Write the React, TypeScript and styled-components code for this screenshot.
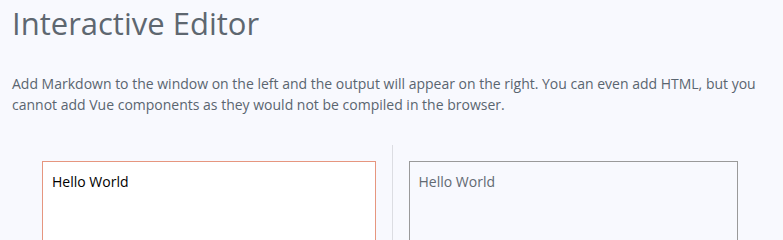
import styled, { createGlobalStyle } from 'styled-components';

const GlobalStyle = createGlobalStyle`
  html, body {
    margin: 0;
    padding: 0;
    background: #f8f9fe;
  }
  body {
    font-family: "Open Sans", "Liberation Sans", sans-serif;
  }
`;

const Page = styled.div`
  padding: 0 12px;
`;

const Title = styled.h1`
  margin: 0;
  font-size: 31px;
  font-weight: 400;
  line-height: 46px;
  color: #5e6770;
`;

const Intro = styled.p`
  margin: 27px 0 0;
  font-size: 14px;
  line-height: 21px;
  color: #5a6570;
`;

const EditorRow = styled.div`
  display: grid;
  grid-template-columns: minmax(0, 1fr) minmax(0, 1fr);
  margin: 30px -12px 0;
`;

const Half = styled.div<{ $side: 'left' | 'right' }>`
  box-sizing: border-box;
  padding: 16px ${(p) => (p.$side === 'left' ? '16px 0 42px' : '45px 0 16px')};
  border-left: ${(p) => (p.$side === 'right' ? '1px solid #dcdde2' : 'none')};
`;

const Editor = styled.textarea`
  display: block;
  box-sizing: border-box;
  width: 100%;
  height: 200px;
  margin: 0;
  padding: 10px 9px;
  resize: none;
  border: 1px solid #e6967f;
  background: #fff;
  font-family: "Open Sans", "Liberation Sans", sans-serif;
  font-size: 14px;
  line-height: 20px;
  color: #000;
  outline: none;
`;

const Preview = styled.div`
  box-sizing: border-box;
  height: 200px;
  padding: 10px 9px;
  border: 1px solid #9a9a9a;
  font-size: 14px;
  line-height: 20px;
  color: #626a72;

  p {
    margin: 0;
  }
`;

export default function App() {
  return (
    <>
      <GlobalStyle />
      <Page>
        <Title>Interactive Editor</Title>
        <Intro>
          Add Markdown to the window on the left and the output will appear on the right. You can even add
          HTML, but you cannot add Vue components as they would not be compiled in the browser.
        </Intro>
        <EditorRow>
          <Half $side="left">
            <Editor defaultValue="Hello World" spellCheck={false} />
          </Half>
          <Half $side="right">
            <Preview>
              <p>Hello World</p>
            </Preview>
          </Half>
        </EditorRow>
      </Page>
    </>
  );
}
